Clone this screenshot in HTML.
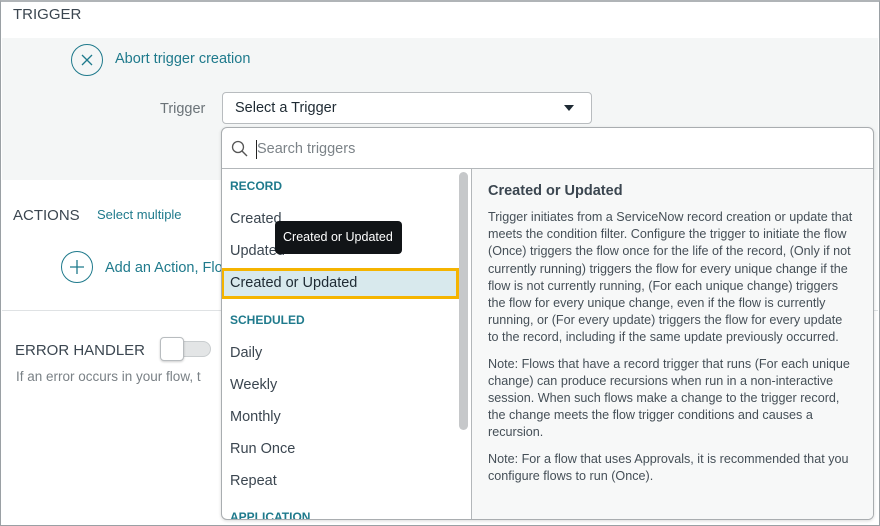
<!DOCTYPE html>
<html><head><style>
*{box-sizing:border-box;margin:0;padding:0}
body{width:880px;height:526px;overflow:hidden;background:#fff;font-family:"Liberation Sans",sans-serif;position:relative;color:#2e3d49}
.frame{position:absolute;left:0;top:0;width:880px;height:526px;border:1px solid #9aa0a4;border-top:2px solid #b0b4b7}
.abs{position:absolute;white-space:nowrap}
.teal{color:#1f7a8c}
.desc p{white-space:nowrap}
</style></head><body>
<div class="frame"></div>
<div class="abs" style="left:13px;top:6px;font-size:15px;color:#3b4650">TRIGGER</div>
<div class="abs" style="left:2px;top:38px;width:876px;height:142px;background:#f4f6f6"></div>
<div class="abs" style="left:71px;top:44px;width:32px;height:32px;border:1.2px solid #1f7a8c;border-radius:50%"></div>
<svg class="abs" style="left:79px;top:52px" width="16" height="16"><path d="M3 3L13 13M13 3L3 13" stroke="#1f7a8c" stroke-width="1.3"/></svg>
<div class="abs teal" style="left:115px;top:51px;font-size:14.5px">Abort trigger creation</div>
<div class="abs" style="left:160px;top:101px;font-size:14.5px;color:#6b7378">Trigger</div>
<div class="abs" style="left:222px;top:92px;width:370px;height:32px;background:#fff;border:1px solid #b8bcbf;border-radius:4px"></div>
<div class="abs" style="left:235px;top:100px;font-size:14.5px;color:#1e2a33">Select a Trigger</div>
<svg class="abs" style="left:564px;top:105px" width="10" height="6"><path d="M0 0H10L5 6Z" fill="#1e2a33"/></svg>

<div class="abs" style="left:13px;top:207px;font-size:15px;color:#3b4650">ACTIONS</div>
<div class="abs teal" style="left:97px;top:207px;font-size:13px">Select multiple</div>
<div class="abs" style="left:61px;top:251px;width:32px;height:32px;border:1.2px solid #1f7a8c;border-radius:50%"></div>
<svg class="abs" style="left:69px;top:259px" width="16" height="16"><path d="M8 1V15M1 8H15" stroke="#1f7a8c" stroke-width="1.3"/></svg>
<div class="abs teal" style="left:105px;top:260px;font-size:14.5px">Add an Action, Flow</div>
<div class="abs" style="left:2px;top:310px;width:876px;height:1px;background:#dfe2e4"></div>
<div class="abs" style="left:15px;top:342px;font-size:15px;color:#3b4650">ERROR HANDLER</div>
<div class="abs" style="left:161px;top:341px;width:50px;height:16px;background:#e3e5e6;border:1px solid #c9cdcf;border-radius:8px"></div>
<div class="abs" style="left:160px;top:337px;width:24px;height:24px;background:#fff;border:1px solid #b8bcbf;border-radius:4px;box-shadow:0 1px 2px rgba(0,0,0,.2)"></div>
<div class="abs" style="left:16px;top:369px;font-size:13.5px;color:#7a8186">If an error occurs in your flow, t</div>

<div class="abs" style="left:221px;top:127px;width:653px;height:393px;background:#fff;border:1px solid #a9adb0;border-radius:6px;overflow:hidden;box-shadow:0 1px 3px rgba(0,0,0,.15)">
  <svg class="abs" style="left:9px;top:12px" width="18" height="18"><circle cx="7" cy="7" r="5.5" fill="none" stroke="#555" stroke-width="1.3"/><path d="M11 11L16 16" stroke="#555" stroke-width="1.4"/></svg>
  <div class="abs" style="left:34px;top:12px;width:1px;height:19px;background:#222"></div>
  <div class="abs" style="left:35px;top:13px;font-size:14.5px;color:#7c8388">Search triggers</div>
  <div class="abs" style="left:0;top:40px;width:653px;height:1px;background:#b3b7ba"></div>
  <div class="abs" style="left:249px;top:41px;width:1px;height:352px;background:#b3b7ba"></div>
  <div class="abs" style="left:250px;top:41px;width:403px;height:352px;background:#f7f8f8"></div>
  <div class="abs" style="left:237px;top:44px;width:9px;height:258px;background:#c6c8ca;border-radius:5px"></div>
  <div class="abs teal" style="left:8px;top:51px;font-size:12px;font-weight:bold">RECORD</div>
  <div class="abs" style="left:8px;top:83px;font-size:14.5px;color:#3b4650">Created</div>
  <div class="abs" style="left:8px;top:115px;font-size:14.5px;color:#3b4650">Updated</div>
  <div class="abs" style="left:-1px;top:140px;width:238px;height:31px;background:#d8e9ed;border:3px solid #f5b400"></div>
  <div class="abs" style="left:8px;top:147px;font-size:14.5px;color:#1e2a33">Created or Updated</div>
  <div class="abs teal" style="left:8px;top:185px;font-size:12px;font-weight:bold">SCHEDULED</div>
  <div class="abs" style="left:8px;top:217px;font-size:14.5px;color:#3b4650">Daily</div>
  <div class="abs" style="left:8px;top:249px;font-size:14.5px;color:#3b4650">Weekly</div>
  <div class="abs" style="left:8px;top:281px;font-size:14.5px;color:#3b4650">Monthly</div>
  <div class="abs" style="left:8px;top:313px;font-size:14.5px;color:#3b4650">Run Once</div>
  <div class="abs" style="left:8px;top:345px;font-size:14.5px;color:#3b4650">Repeat</div>
  <div class="abs teal" style="left:8px;top:382px;font-size:12px;font-weight:bold">APPLICATION</div>
  <div class="abs" style="left:266px;top:55px;font-size:14.5px;font-weight:bold;color:#3b4650">Created or Updated</div>
  <div class="abs desc" style="left:266px;top:81px;font-size:12.6px;line-height:17.2px;color:#454f57">
    <p>Trigger initiates from a ServiceNow record creation or update that<br>meets the condition filter. Configure the trigger to initiate the flow<br>(Once) triggers the flow once for the life of the record, (Only if not<br>currently running) triggers the flow for every unique change if the<br>flow is not currently running, (For each unique change) triggers<br>the flow for every unique change, even if the flow is currently<br>running, or (For every update) triggers the flow for every update<br>to the record, including if the same update previously occurred.</p>
    <p style="margin-top:9px">Note: Flows that have a record trigger that runs (For each unique<br>change) can produce recursions when run in a non-interactive<br>session. When such flows make a change to the trigger record,<br>the change meets the flow trigger conditions and causes a<br>recursion.</p>
    <p style="margin-top:9px">Note: For a flow that uses Approvals, it is recommended that you<br>configure flows to run (Once).</p>
  </div>
</div>
<div class="abs" style="left:275px;top:221px;width:127px;height:33px;background:#111417;border-radius:4px"></div>
<div class="abs" style="left:283px;top:230px;font-size:12.5px;color:#fff">Created or Updated</div>
</body></html>
